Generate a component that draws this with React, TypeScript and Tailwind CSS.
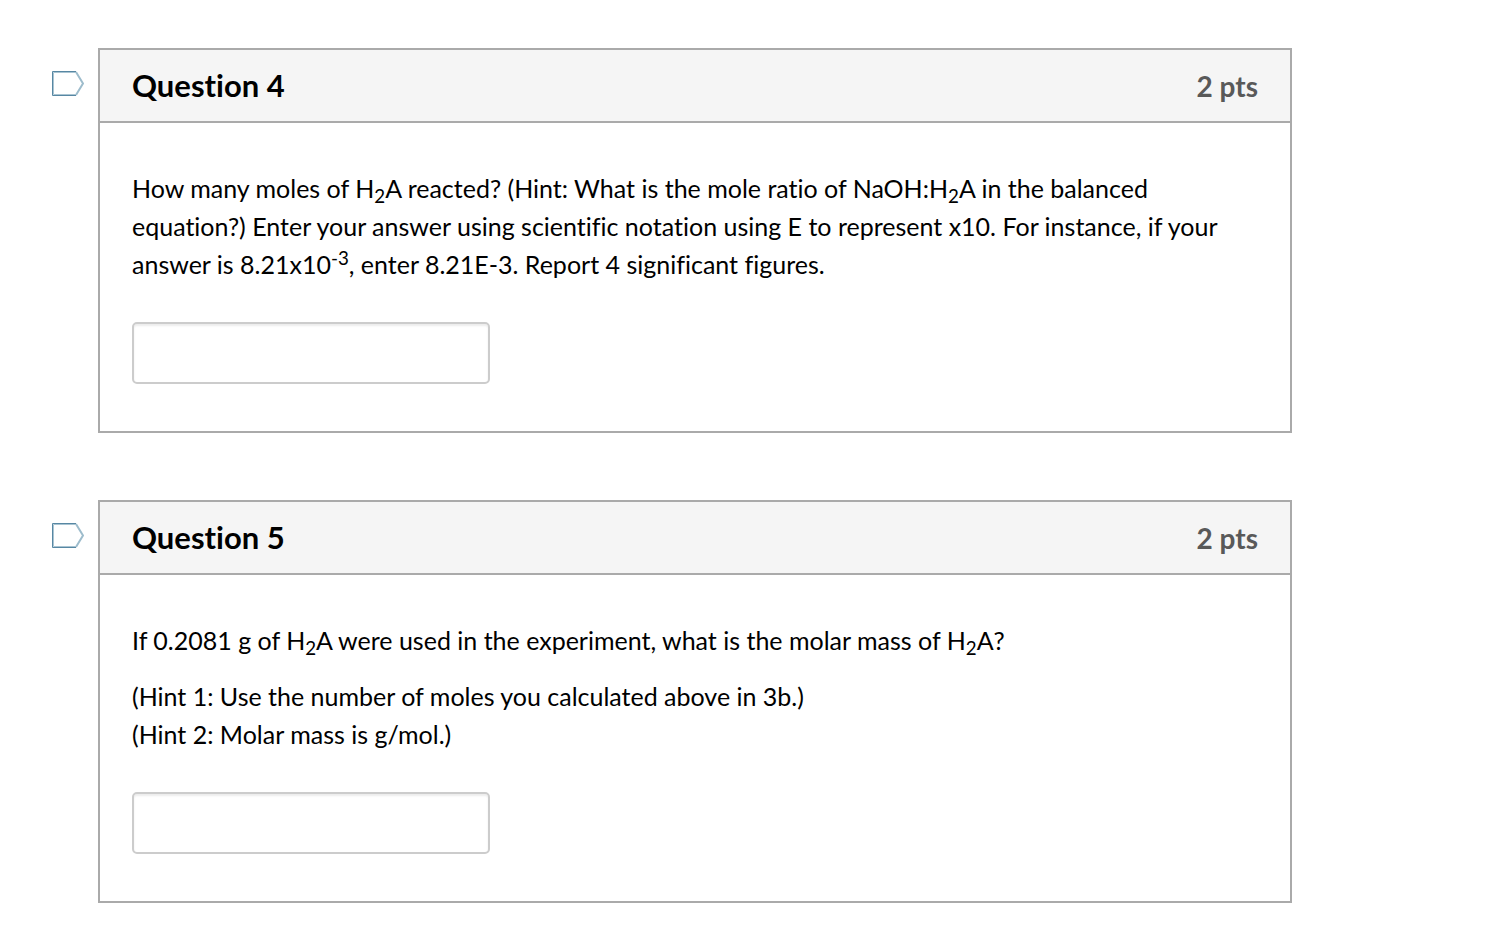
import React from "react";

type Question = {
  id: number;
  title: string;
  points: number;
  prompt: React.ReactNode;
};

const questions: Question[] = [
  {
    id: 4,
    title: "Question 4",
    points: 2,
    prompt: (
      <p>
        How many moles of H<sub>2</sub>A reacted? (Hint: What is the mole ratio of NaOH:H<sub>2</sub>A in the balanced
        equation?) Enter your answer using scientific notation using E to represent x10. For instance, if your answer
        is 8.21x10<sup>-3</sup>, enter 8.21E-3. Report 4 significant figures.
      </p>
    ),
  },
  {
    id: 5,
    title: "Question 5",
    points: 2,
    prompt: (
      <>
        <p>
          If 0.2081 g of H<sub>2</sub>A were used in the experiment, what is the molar mass of H<sub>2</sub>A?
        </p>
        <p>
          (Hint 1: Use the number of moles you calculated above in 3b.)
          <br />
          (Hint 2: Molar mass is g/mol.)
        </p>
      </>
    ),
  },
];

function FlagButton({ label }: { label: string }) {
  return (
    <button type="button" aria-label={label} className="mt-[23px] h-[25px] w-8 shrink-0 cursor-pointer">
      <svg viewBox="0 0 32 25" className="block h-[25px] w-8" fill="none">
        <path d="M24 1 31 12.5 24 24" stroke="#9dbccc" strokeWidth="2" />
        <path d="M24 1.5H1.5v22H24" stroke="#a9c4d2" />
        <path d="M24 .5H.5v24H24" stroke="#5787a3" />
      </svg>
    </button>
  );
}

function QuestionCard({ question }: { question: Question }) {
  const promptId = `question-${question.id}-prompt`;

  return (
    <div className="flex items-start gap-[14px]">
      <FlagButton label={`Flag ${question.title}`} />

      <section className="min-w-0 flex-1 border-2 border-[#aaaaaa] bg-white">
        <header className="flex h-[73px] items-center justify-between border-b-2 border-[#aaaaaa] bg-[#f5f5f5] px-8">
          <h2 className="text-[31px] font-bold text-black">{question.title}</h2>
          <span className="text-[28px] font-bold text-[#595959]">{question.points} pts</span>
        </header>

        <div className="px-8 pt-[46px] pb-[47px]">
          <div id={promptId} className="space-y-[18px] text-[25px] leading-[38px] text-black">
            {question.prompt}
          </div>
          <input
            type="text"
            aria-labelledby={promptId}
            className="mt-[39px] block h-[62px] w-[358px] max-w-full rounded-[5px] border-2 border-[#cccccc] bg-white px-3 text-[25px] shadow-[inset_0_2px_2px_rgba(0,0,0,0.075)] outline-none focus:border-[#5787a3]"
          />
        </div>
      </section>
    </div>
  );
}

export default function App() {
  return (
    <main className="min-h-screen bg-white pt-12 pr-[210px] pb-10 pl-[52px] font-['Lato',sans-serif] [font-variant-ligatures:none]">
      <div className="flex flex-col gap-[67px]">
        {questions.map((question) => (
          <QuestionCard key={question.id} question={question} />
        ))}
      </div>
    </main>
  );
}
